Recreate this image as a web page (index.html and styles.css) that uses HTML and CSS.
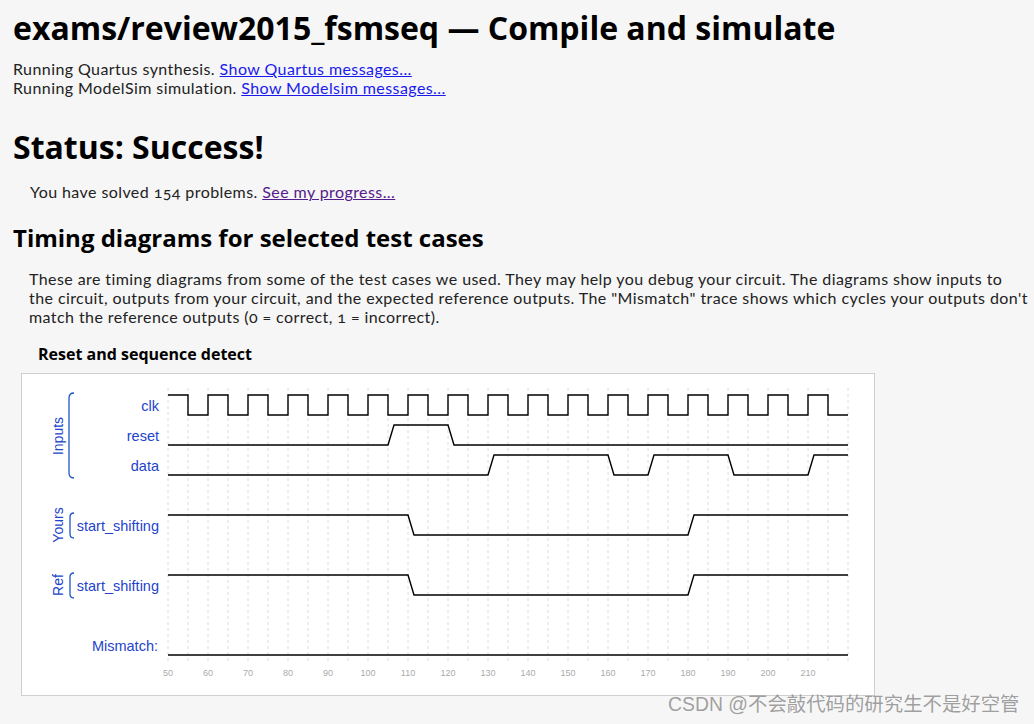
FILE: index.html
```html
<!DOCTYPE html>
<html lang="en">
<head>
<meta charset="utf-8">
<title>exams/review2015_fsmseq — Compile and simulate</title>
<link rel="stylesheet" href="styles.css">
</head>
<body>
<div class="page">
  <h1 class="title">exams/review2015_fsmseq — Compile and simulate</h1>
  <div class="log">
    <div>Running Quartus synthesis. <a class="link" href="#q">Show Quartus messages...</a></div>
    <div>Running ModelSim simulation. <a class="link" href="#m">Show Modelsim messages...</a></div>
  </div>
  <h2 class="status">Status: Success!</h2>
  <p class="solved">You have solved 154 problems. <a class="link visited" href="#p">See my progress...</a></p>
  <h3 class="section">Timing diagrams for selected test cases</h3>
  <p class="desc">These are timing diagrams from some of the test cases we used. They may help you debug your circuit. The diagrams show inputs to<br>the circuit, outputs from your circuit, and the expected reference outputs. The "Mismatch" trace shows which cycles your outputs don't<br>match the reference outputs (0 = correct, 1 = incorrect).</p>
  <h4 class="case">Reset and sequence detect</h4>
  <div class="diagram">
    <svg class="wave" width="852" height="321" viewBox="22 374 852 321">
      <g class="grid">
        <path d="M168 388V662M188 388V662M208 388V662M228 388V662M248 388V662M268 388V662M288 388V662M308 388V662M328 388V662M348 388V662M368 388V662M388 388V662M408 388V662M428 388V662M448 388V662M468 388V662M488 388V662M508 388V662M528 388V662M548 388V662M568 388V662M588 388V662M608 388V662M628 388V662M648 388V662M668 388V662M688 388V662M708 388V662M728 388V662M748 388V662M768 388V662M788 388V662M808 388V662M828 388V662M848 388V662"/>
      </g>
      <g class="ticks">
        <text x="168" y="676">50</text>
        <text x="208" y="676">60</text>
        <text x="248" y="676">70</text>
        <text x="288" y="676">80</text>
        <text x="328" y="676">90</text>
        <text x="368" y="676">100</text>
        <text x="408" y="676">110</text>
        <text x="448" y="676">120</text>
        <text x="488" y="676">130</text>
        <text x="528" y="676">140</text>
        <text x="568" y="676">150</text>
        <text x="608" y="676">160</text>
        <text x="648" y="676">170</text>
        <text x="688" y="676">180</text>
        <text x="728" y="676">190</text>
        <text x="768" y="676">200</text>
        <text x="808" y="676">210</text>
      </g>
      <g class="braces">
        <path d="M74 393Q69 393 69 398V473Q69 478 74 478"/>
        <path d="M74 513Q70 513 70 517V534Q70 538 74 538"/>
        <path d="M74 573Q70 573 70 577V594Q70 598 74 598"/>
      </g>
      <g class="groups">
        <text transform="translate(63 436) rotate(-90)">Inputs</text>
        <text transform="translate(63 525) rotate(-90)">Yours</text>
        <text transform="translate(63 585) rotate(-90)">Ref</text>
      </g>
      <g class="labels">
        <text x="159" y="411">clk</text>
        <text x="159" y="441">reset</text>
        <text x="159" y="471">data</text>
        <text x="159" y="531">start_shifting</text>
        <text x="159" y="591">start_shifting</text>
        <text x="158" y="651">Mismatch:</text>
      </g>
      <g class="signals">
        <path d="M168 395H188V415H208V395H228V415H248V395H268V415H288V395H308V415H328V395H348V415H368V395H388V415H408V395H428V415H448V395H468V415H488V395H508V415H528V395H548V415H568V395H588V415H608V395H628V415H648V395H668V415H688V395H708V415H728V395H748V415H768V395H788V415H808V395H828V415H848"/>
        <path d="M168 445H388L394 425H448L454 445H848"/>
        <path d="M168 475H488L494 455H608L614 475H648L654 455H728L734 475H808L814 455H848"/>
        <path d="M168 515H408L414 535H688L694 515H848"/>
        <path d="M168 575H408L414 595H688L694 575H848"/>
        <path d="M168 655H848"/>
      </g>
    </svg>
  </div>
</div>
<div class="watermark">CSDN @不会敲代码的研究生不是好空管</div>
</body>
</html>
```

FILE: styles.css
```css
html, body {
  margin: 0;
  padding: 0;
  background: #f6f6f6;
}

body {
  font-family: Lato, "Noto Sans", sans-serif;
  font-size: 16px;
  letter-spacing: 0.42px;
  font-variant-numeric: oldstyle-nums;
  color: #222;
  width: 1034px;
  height: 724px;
  overflow: hidden;
  position: relative;
}

.page {
  padding: 8px 0 0 13px;
}

.title,
.status,
.section,
.case {
  font-family: "Open Sans", "Noto Sans", sans-serif;
  font-weight: 700;
  letter-spacing: 0;
  font-variant-numeric: normal;
  color: #000;
  margin: 0;
}

.title {
  font-size: 32px;
  line-height: 40px;
}

.log {
  margin-top: 11px;
  line-height: 19px;
}

.link {
  color: #1a1aee;
  text-decoration: underline;
}

.link.visited {
  color: #551a8b;
}

.status {
  font-size: 32px;
  line-height: 40px;
  margin-top: 30px;
}

.solved {
  margin: 15px 0 0 0;
  padding-left: 17px;
  line-height: 19px;
}

.section {
  font-size: 24px;
  line-height: 30px;
  margin-top: 22px;
}

.desc {
  margin: 16px 0 0 0;
  padding-left: 16px;
  line-height: 19px;
  white-space: nowrap;
}

.case {
  font-size: 16px;
  line-height: 20px;
  margin: 18px 0 0 25px;
}

.diagram {
  margin: 9px 0 0 8px;
  width: 852px;
  height: 321px;
  border: 1px solid #cfcfcf;
  background: #fff;
  letter-spacing: 0;
  font-variant-numeric: normal;
}

.wave {
  display: block;
}

.grid path {
  stroke: #dcdcdc;
  stroke-width: 1;
  stroke-dasharray: 3 3;
  fill: none;
}

.ticks text {
  font-family: "Liberation Sans", Arial, sans-serif;
  font-size: 9px;
  fill: #aaa;
  text-anchor: middle;
}

.braces path {
  fill: none;
  stroke: #1f55cc;
  stroke-width: 1.3;
}

.groups text {
  font-family: "Liberation Sans", Arial, sans-serif;
  font-size: 14px;
  fill: #2145c8;
  text-anchor: middle;
}

.labels text {
  font-family: "Liberation Sans", Arial, sans-serif;
  font-size: 14.5px;
  fill: #2343cc;
  text-anchor: end;
}

.signals path {
  fill: none;
  stroke: #000;
  stroke-width: 1.4;
}

.watermark {
  position: absolute;
  left: 668px;
  top: 693px;
  font-family: "Liberation Sans", "Noto Sans CJK SC", sans-serif;
  font-size: 19.4px;
  line-height: 22px;
  letter-spacing: 0;
  color: rgba(120, 120, 120, 0.7);
  white-space: nowrap;
}
```
